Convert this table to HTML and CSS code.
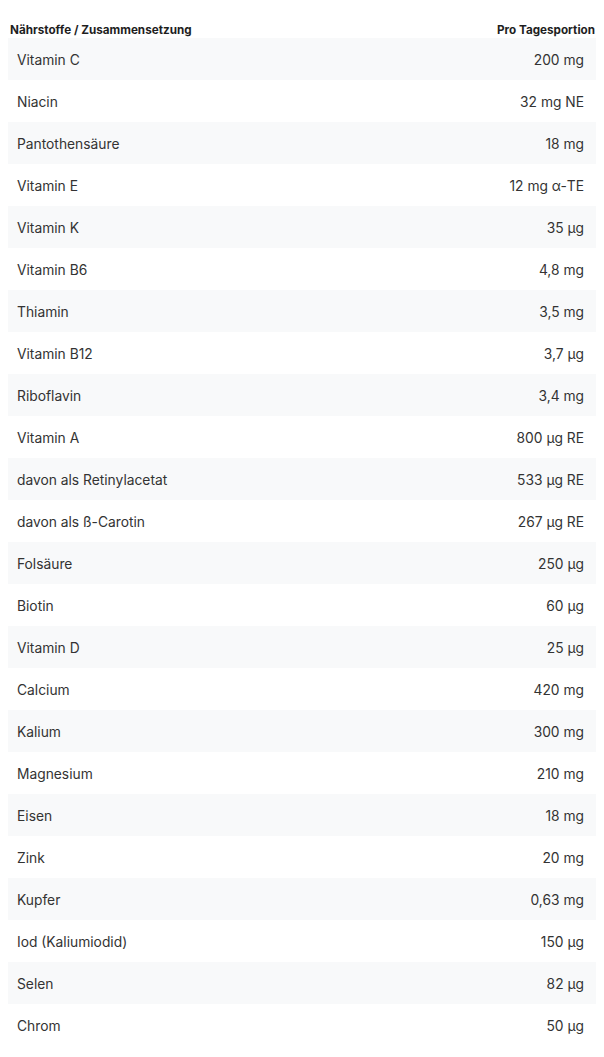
FILE: index.html
```html
<!DOCTYPE html>
<html lang="de">
<head>
<meta charset="utf-8">
<title>Nährstoffe</title>
<link rel="stylesheet" href="styles.css">
</head>
<body>
<table class="nutri">
  <thead>
    <tr><th class="h-left">Nährstoffe / Zusammensetzung</th><th class="h-right">Pro Tagesportion</th></tr>
  </thead>
  <tbody>
    <tr><td>Vitamin C</td><td class="v">200 mg</td></tr>
    <tr><td>Niacin</td><td class="v">32 mg NE</td></tr>
    <tr><td>Pantothensäure</td><td class="v">18 mg</td></tr>
    <tr><td>Vitamin E</td><td class="v">12 mg α-TE</td></tr>
    <tr><td>Vitamin K</td><td class="v">35 µg</td></tr>
    <tr><td>Vitamin B6</td><td class="v">4,8 mg</td></tr>
    <tr><td>Thiamin</td><td class="v">3,5 mg</td></tr>
    <tr><td>Vitamin B12</td><td class="v">3,7 µg</td></tr>
    <tr><td>Riboflavin</td><td class="v">3,4 mg</td></tr>
    <tr><td>Vitamin A</td><td class="v">800 µg RE</td></tr>
    <tr><td>davon als Retinylacetat</td><td class="v">533 µg RE</td></tr>
    <tr><td>davon als ß-Carotin</td><td class="v">267 µg RE</td></tr>
    <tr><td>Folsäure</td><td class="v">250 µg</td></tr>
    <tr><td>Biotin</td><td class="v">60 µg</td></tr>
    <tr><td>Vitamin D</td><td class="v">25 µg</td></tr>
    <tr><td>Calcium</td><td class="v">420 mg</td></tr>
    <tr><td>Kalium</td><td class="v">300 mg</td></tr>
    <tr><td>Magnesium</td><td class="v">210 mg</td></tr>
    <tr><td>Eisen</td><td class="v">18 mg</td></tr>
    <tr><td>Zink</td><td class="v">20 mg</td></tr>
    <tr><td>Kupfer</td><td class="v">0,63 mg</td></tr>
    <tr><td>Iod (Kaliumiodid)</td><td class="v">150 µg</td></tr>
    <tr><td>Selen</td><td class="v">82 µg</td></tr>
    <tr><td>Chrom</td><td class="v">50 µg</td></tr>
  </tbody>
</table>
</body>
</html>
```

FILE: styles.css
```css
html, body {
  background: #ffffff;
}
body {
  margin: 0;
  padding: 8px;
  font-family: Inter, "Noto Sans", "DejaVu Sans", sans-serif;
  color: #333333;
}
.nutri {
  width: 588px;
  border-collapse: collapse;
  border-spacing: 0;
}
.nutri th {
  height: 30px;
  box-sizing: border-box;
  padding: 0 1px 1px 2px;
  vertical-align: bottom;
  font-size: 11.7px;
  line-height: 14px;
  font-weight: 700;
  color: #1e1e1e;
}
.h-left { text-align: left; }
.h-right { text-align: right; }
.nutri td {
  height: 42px;
  box-sizing: border-box;
  padding: 2px 12px 0 9px;
  font-size: 13.8px;
  line-height: 16px;
  vertical-align: middle;
  text-align: left;
}
.nutri td.v {
  text-align: right;
}
.nutri tbody tr:nth-child(odd) {
  background: #f8f9fa;
}
```
